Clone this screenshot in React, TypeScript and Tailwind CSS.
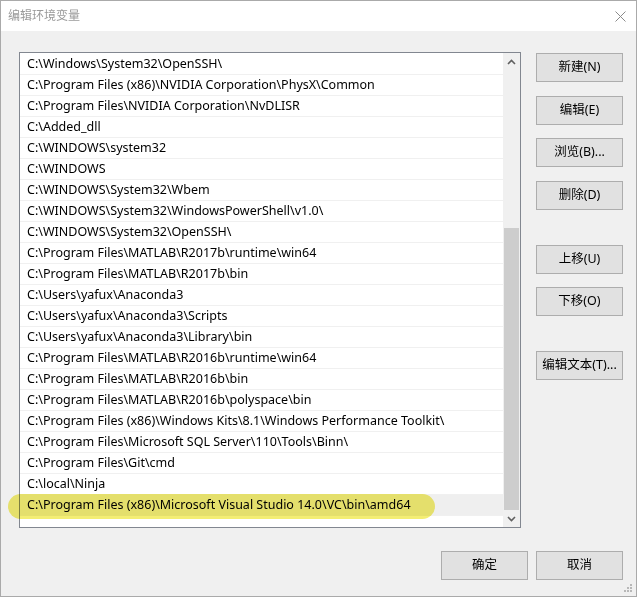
import React from "react";

const paths = [
  "C:\\Windows\\System32\\OpenSSH\\",
  "C:\\Program Files (x86)\\NVIDIA Corporation\\PhysX\\Common",
  "C:\\Program Files\\NVIDIA Corporation\\NvDLISR",
  "C:\\Added_dll",
  "C:\\WINDOWS\\system32",
  "C:\\WINDOWS",
  "C:\\WINDOWS\\System32\\Wbem",
  "C:\\WINDOWS\\System32\\WindowsPowerShell\\v1.0\\",
  "C:\\WINDOWS\\System32\\OpenSSH\\",
  "C:\\Program Files\\MATLAB\\R2017b\\runtime\\win64",
  "C:\\Program Files\\MATLAB\\R2017b\\bin",
  "C:\\Users\\yafux\\Anaconda3",
  "C:\\Users\\yafux\\Anaconda3\\Scripts",
  "C:\\Users\\yafux\\Anaconda3\\Library\\bin",
  "C:\\Program Files\\MATLAB\\R2016b\\runtime\\win64",
  "C:\\Program Files\\MATLAB\\R2016b\\bin",
  "C:\\Program Files\\MATLAB\\R2016b\\polyspace\\bin",
  "C:\\Program Files (x86)\\Windows Kits\\8.1\\Windows Performance Toolkit\\",
  "C:\\Program Files\\Microsoft SQL Server\\110\\Tools\\Binn\\",
  "C:\\Program Files\\Git\\cmd",
  "C:\\local\\Ninja",
  "C:\\Program Files (x86)\\Microsoft Visual Studio 14.0\\VC\\bin\\amd64",
];

const font = { fontFamily: '"Noto Sans", "Noto Sans CJK SC", sans-serif' };

function Btn({ label, className = "" }: { label: string; className?: string }) {
  return (
    <button
      className={`w-[87px] h-[29px] shrink-0 border border-[#adadad] bg-[#e1e1e1] text-[12.5px] text-black leading-none flex items-center justify-center ${className}`}
    >
      {label}
    </button>
  );
}

function Chevron({ up }: { up?: boolean }) {
  return (
    <svg width="9" height="6" viewBox="0 0 9 6" className={up ? "" : "rotate-180"}>
      <path d="M1 5 L4.5 1.5 L8 5" fill="none" stroke="#606060" strokeWidth="1.6" />
    </svg>
  );
}

export default function App() {
  return (
    <div className="w-[637px] h-[597px] bg-white" style={font}>
      <div className="relative w-[637px] h-[597px] border border-[#aaaaaa] flex flex-col">
        {/* title bar */}
        <div className="h-[30px] bg-white flex items-center justify-between pl-[7px] pr-[10px] shrink-0">
          <span className="text-[12px] text-[#9a9a9a]">编辑环境变量</span>
          <svg width="11" height="11" viewBox="0 0 11 11">
            <path d="M0.5 0.5 L10.5 10.5 M10.5 0.5 L0.5 10.5" stroke="#8a8a8a" strokeWidth="1" />
          </svg>
        </div>

        <div className="flex-1 bg-[#f0f0f0] pl-[18px] pt-[21px] flex flex-col">
          <div className="flex gap-[15px]">
            {/* list box */}
            <div className="w-[502px] h-[476px] border border-[#828790] bg-white flex">
              <div className="flex-1 pt-px">
                {paths.map((p, i) => (
                  <div
                    key={p + i}
                    className={`h-[21px] border-b border-[#f0f0f0] pl-[7px] pt-px flex items-center text-[12.5px] text-black whitespace-nowrap ${
                      i === paths.length - 1 ? "bg-[#efefef]" : ""
                    }`}
                  >
                    {p}
                  </div>
                ))}
              </div>
              {/* vertical scroll bar */}
              <div className="w-[17px] bg-[#f0f0f0] flex flex-col">
                <div className="h-[17px] flex items-center justify-center">
                  <Chevron up />
                </div>
                <div className="flex-1 flex flex-col justify-end">
                  <div className="h-[282px] mx-px bg-[#cdcdcd]" />
                </div>
                <div className="h-[17px] flex items-center justify-center">
                  <Chevron />
                </div>
              </div>
            </div>

            {/* action buttons */}
            <div className="flex flex-col pt-px">
              <Btn label="新建(N)" />
              <Btn label="编辑(E)" className="mt-[14px]" />
              <Btn label="浏览(B)..." className="mt-[13px]" />
              <Btn label="删除(D)" className="mt-[14px]" />
              <Btn label="上移(U)" className="mt-[35px]" />
              <Btn label="下移(O)" className="mt-[13px]" />
              <Btn label="编辑文本(T)..." className="mt-[35px]" />
            </div>
          </div>

          <div className="flex justify-end gap-[8px] mt-[23px] pr-[13px]">
            <Btn label="确定" />
            <Btn label="取消" />
          </div>
        </div>

        {/* resize grip */}
        <svg width="10" height="10" viewBox="0 0 10 10" className="absolute right-[3px] bottom-[3px]">
          <rect x="7" y="1" width="2" height="2" fill="#b8b8b8" />
          <rect x="4" y="4" width="2" height="2" fill="#b8b8b8" />
          <rect x="7" y="4" width="2" height="2" fill="#b8b8b8" />
          <rect x="1" y="7" width="2" height="2" fill="#b8b8b8" />
          <rect x="4" y="7" width="2" height="2" fill="#b8b8b8" />
          <rect x="7" y="7" width="2" height="2" fill="#b8b8b8" />
        </svg>

        {/* marker stroke over the last entry */}
        <div className="absolute left-[7px] top-[493px] w-[427px] h-[25px] rounded-full bg-[#f2ea50] opacity-80 mix-blend-multiply" />
      </div>
    </div>
  );
}
